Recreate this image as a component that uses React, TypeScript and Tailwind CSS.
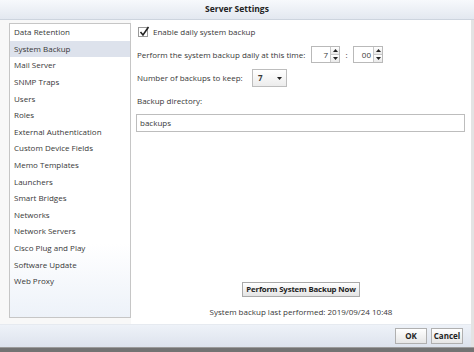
import React from "react";

const items = [
  "Data Retention",
  "System Backup",
  "Mail Server",
  "SNMP Traps",
  "Users",
  "Roles",
  "External Authentication",
  "Custom Device Fields",
  "Memo Templates",
  "Launchers",
  "Smart Bridges",
  "Networks",
  "Network Servers",
  "Cisco Plug and Play",
  "Software Update",
  "Web Proxy",
];

function Up() {
  return (
    <svg width="5" height="3" viewBox="0 0 5 3">
      <polygon points="0,3 5,3 2.5,0" fill="#222" />
    </svg>
  );
}
function Down() {
  return (
    <svg width="5" height="3" viewBox="0 0 5 3">
      <polygon points="0,0 5,0 2.5,3" fill="#222" />
    </svg>
  );
}

function Spinner({ value, w }: { value: string; w: string }) {
  return (
    <div className={`flex h-[17px] border border-[#b9b9b9] bg-white ${w}`}>
      <div className="flex-1 flex items-center justify-end pr-[2px]">{value}</div>
      <div className="w-[9px] flex flex-col border-l border-[#c8c8c8]">
        <div className="flex-1 flex items-center justify-center bg-linear-to-b from-white to-[#e9e9e9] border-b border-[#c8c8c8]">
          <Up />
        </div>
        <div className="flex-1 flex items-center justify-center bg-linear-to-b from-white to-[#e9e9e9]">
          <Down />
        </div>
      </div>
    </div>
  );
}

export default function App() {
  return (
    <div className="w-[474px] h-[352px] flex flex-col overflow-hidden whitespace-nowrap font-['Open_Sans',sans-serif] text-[8px] leading-none text-[#383838]">
      <div className="h-[20px] shrink-0 flex items-center justify-center bg-linear-to-b from-[#f7f9fc] to-[#e3e8f0] border-b border-[#cdd4de] font-bold text-[8.5px] text-[#222]">
        Server Settings
      </div>
      <div className="flex-1 flex flex-col border-r-[3px] border-[#e3e3e3]">
        <div className="flex-1 flex bg-white">
          <div className="pl-[9px] pt-[3px] pb-[6px] bg-[#f8f8f8]">
            <div className="w-[122px] h-full border border-[#c6c6c6] bg-linear-to-b from-white from-75% to-[#edf2f9]">
              {items.map((it) => (
                <div
                  key={it}
                  className={`h-[16.6px] flex items-center pl-[4px] ${
                    it === "System Backup" ? "bg-[#dde2ec]" : ""
                  }`}
                >
                  {it}
                </div>
              ))}
            </div>
          </div>
          <div className="flex-1 flex flex-col pl-[6px] pr-[6px] pt-[6px] pb-[6px]">
            <div className="h-[12px] flex items-center">
              <div className="relative w-[10px] h-[10px] ml-[1px] border border-[#9a9a9a] bg-white">
                <svg className="absolute -top-[2px] left-[0px]" width="11" height="11" viewBox="0 0 11 11">
                  <polyline points="1.5,6 4,9 9.5,1" fill="none" stroke="#222" strokeWidth="1.6" />
                </svg>
              </div>
              <span className="ml-[5px]">Enable daily system backup</span>
            </div>
            <div className="mt-[8px] h-[17px] flex items-center">
              <span className="w-[174px]">Perform the system backup daily at this time:</span>
              <Spinner value="7" w="w-[29px]" />
              <span className="w-[13px] text-center">:</span>
              <Spinner value="00" w="w-[30px]" />
            </div>
            <div className="mt-[6px] h-[18px] flex items-center">
              <span className="w-[115px]">Number of backups to keep:</span>
              <div className="w-[35px] h-[18px] flex items-center border border-[#bdbdbd] bg-linear-to-b from-white to-[#ececec]">
                <span className="pl-[5px] font-bold flex-1">7</span>
                <span className="w-[13px] flex justify-center">
                  <Down />
                </span>
              </div>
            </div>
            <div className="mt-[8px] h-[12px] flex items-center">Backup directory:</div>
            <div className="mt-[7px] -ml-[1px] h-[18px] flex items-center pl-[3px] border border-[#bdbdbd] bg-white">
              backups
            </div>
            <div className="flex-1" />
            <div className="flex justify-center">
              <div className="w-[118px] h-[15px] flex items-center justify-center border border-[#a9a9a9] bg-linear-to-b from-white to-[#e4e4e4] font-bold text-[7.8px] tracking-[-0.15px] text-[#222]">
                Perform System Backup Now
              </div>
            </div>
            <div className="mt-[9px] h-[12px] flex items-center justify-center">
              System backup last performed: 2019/09/24 10:48
            </div>
          </div>
        </div>
        <div className="h-[23px] shrink-0 flex items-center justify-end gap-[4px] pr-[8px] bg-linear-to-b from-[#eef2f8] to-[#dde3ed] border-t border-[#e6eaf0]">
          <div className="w-[32px] h-[16px] flex items-center justify-center border border-[#b0b0b0] bg-linear-to-b from-white to-[#e6e6e6] font-bold text-[#222]">
            OK
          </div>
          <div className="w-[32px] h-[16px] flex items-center justify-center border border-[#b0b0b0] bg-linear-to-b from-white to-[#e6e6e6] font-bold text-[#222]">
            Cancel
          </div>
        </div>
      </div>
      <div className="h-[5px] shrink-0 bg-[#737373] border-t border-[#9c9c9c]" />
    </div>
  );
}
